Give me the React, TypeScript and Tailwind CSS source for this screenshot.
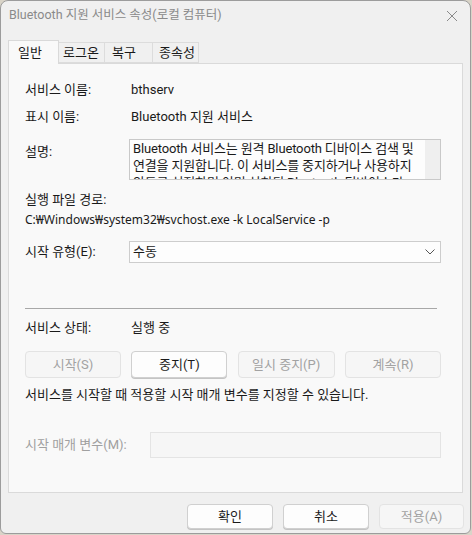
import React from "react";

const font = "font-['Roboto','Noto_Sans_CJK_KR',sans-serif]";

function Btn({ label, disabled, className = "" }: { label: string; disabled?: boolean; className?: string }) {
  return (
    <div
      className={
        "flex items-center justify-center rounded-[4px] border text-[13px] " +
        (disabled
          ? "border-[#e3e3e3] bg-[#f6f6f6] text-[#a2a2a2] "
          : "border-[#d0d0d0] bg-[#fdfdfd] text-[#1a1a1a] shadow-[0_1px_0_#c4c4c4] ") +
        className
      }
    >
      {label}
    </div>
  );
}

export default function App() {
  return (
    <div className={`w-[472px] h-[535px] bg-[#d9d4c8] ${font}`}>
      <div className="flex flex-col w-[471px] h-[534px] rounded-t-[8px] rounded-b-[6px] border border-[#9c9c9c] bg-[#f0f0f0]">
        {/* title bar */}
        <div className="flex items-center justify-between h-[29px] pl-[8px] pr-[10px]">
          <span className="text-[12.5px] text-[#8a8a8a]">Bluetooth 지원 서비스 속성(로컬 컴퓨터)</span>
          <svg width="12" height="12" viewBox="0 0 12 12" className="mr-[2px]">
            <path d="M1 1L11 11M11 1L1 11" stroke="#8a8a8a" strokeWidth="1" fill="none" />
          </svg>
        </div>

        {/* tabs */}
        <div className="flex items-end h-[32px] mt-[1px] pl-[7px] text-[13px] text-[#1a1a1a]">
          <div className="relative z-10 -mb-px flex h-[24px] w-[51px] items-start pt-[2px] pl-[9px] border border-b-0 border-[#d9d9d9] bg-[#f9f9f9]">
            일반
          </div>
          <div className="flex h-[21px] w-[46px] items-center pl-[4px] border border-l-0 border-[#dcdcdc] bg-[#f0f0f0]">로그온</div>
          <div className="flex h-[21px] w-[48px] items-center pl-[7px] border border-l-0 border-[#dcdcdc] bg-[#f0f0f0]">복구</div>
          <div className="flex h-[21px] w-[46px] items-center pl-[6px] border border-l-0 border-[#dcdcdc] bg-[#f0f0f0]">종속성</div>
        </div>

        {/* panel */}
        <div className="ml-[7px] w-[455px] h-[430px] border border-[#dadada] bg-[#f9f9f9] pl-[16px] pr-[21px] text-[13px] text-[#1a1a1a] whitespace-nowrap">
          <div className="flex items-center h-[20px] mt-[16px]">
            <span className="w-[106px]">서비스 이름:</span>
            <span>bthserv</span>
          </div>
          <div className="flex items-center h-[20px] mt-[7px]">
            <span className="w-[106px]">표시 이름:</span>
            <span>Bluetooth 지원 서비스</span>
          </div>
          <div className="flex h-[41px] mt-[12px]">
            <span className="w-[104px] pt-[3px]">설명:</span>
            <div className="flex flex-1 overflow-hidden border border-[#c9c9c9] bg-[#fdfdfd]">
              <div className="flex-1 overflow-hidden pl-[3px] leading-[17px] tracking-[-0.15px]">
                Bluetooth 서비스는 원격 Bluetooth 디바이스 검색 및<br />
                연결을 지원합니다. 이 서비스를 중지하거나 사용하지<br />
                않도록 설정하면 이미 설치된 Bluetooth 디바이스가
              </div>
              <div className="w-[15px] shrink-0 bg-[#efefef]" />
            </div>
          </div>
          <div className="flex items-center h-[20px] mt-[10px]">실행 파일 경로:</div>
          <div className="flex items-center h-[20px] text-[12px] font-['Noto_Sans','Noto_Sans_CJK_KR',sans-serif]">
            C:₩Windows₩system32₩svchost.exe -k LocalService -p
          </div>
          <div className="flex items-center h-[22px] mt-[11px]">
            <span className="w-[104px]">시작 유형(E):</span>
            <div className="flex flex-1 h-[22px] items-center justify-between border border-[#cdcdcd] bg-[#fdfdfd] pl-[3px] pr-[5px]">
              <span>수동</span>
              <svg width="10" height="6" viewBox="0 0 10 6">
                <path d="M0.5 0.5L5 5L9.5 0.5" stroke="#555" strokeWidth="1" fill="none" />
              </svg>
            </div>
          </div>
          <div className="mt-[45px] h-px bg-[#a8a8a8] mr-[4px]" />
          <div className="flex items-center h-[20px] mt-[9px]">
            <span className="w-[106px]">서비스 상태:</span>
            <span>실행 중</span>
          </div>
          <div className="flex justify-between h-[27px] mt-[13px]">
            <Btn label="시작(S)" disabled className="w-[96px]" />
            <Btn label="중지(T)" className="w-[96px]" />
            <Btn label="일시 중지(P)" disabled className="w-[97px]" />
            <Btn label="계속(R)" disabled className="w-[96px]" />
          </div>
          <div className="flex items-center h-[20px] mt-[7px]">서비스를 시작할 때 적용할 시작 매개 변수를 지정할 수 있습니다.</div>
          <div className="flex items-center h-[26px] mt-[27px]">
            <span className="w-[125px] text-[#a0a0a0]">시작 매개 변수(M):</span>
            <div className="flex-1 h-[26px] border border-[#e4e4e4] bg-[#f6f6f6]" />
          </div>
        </div>

        {/* footer */}
        <div className="flex justify-end gap-[10px] pr-[6px] mt-[11px]">
          <Btn label="확인" className="w-[86px] h-[25px]" />
          <Btn label="취소" className="w-[86px] h-[25px]" />
          <Btn label="적용(A)" disabled className="w-[85px] h-[25px]" />
        </div>
      </div>
    </div>
  );
}
